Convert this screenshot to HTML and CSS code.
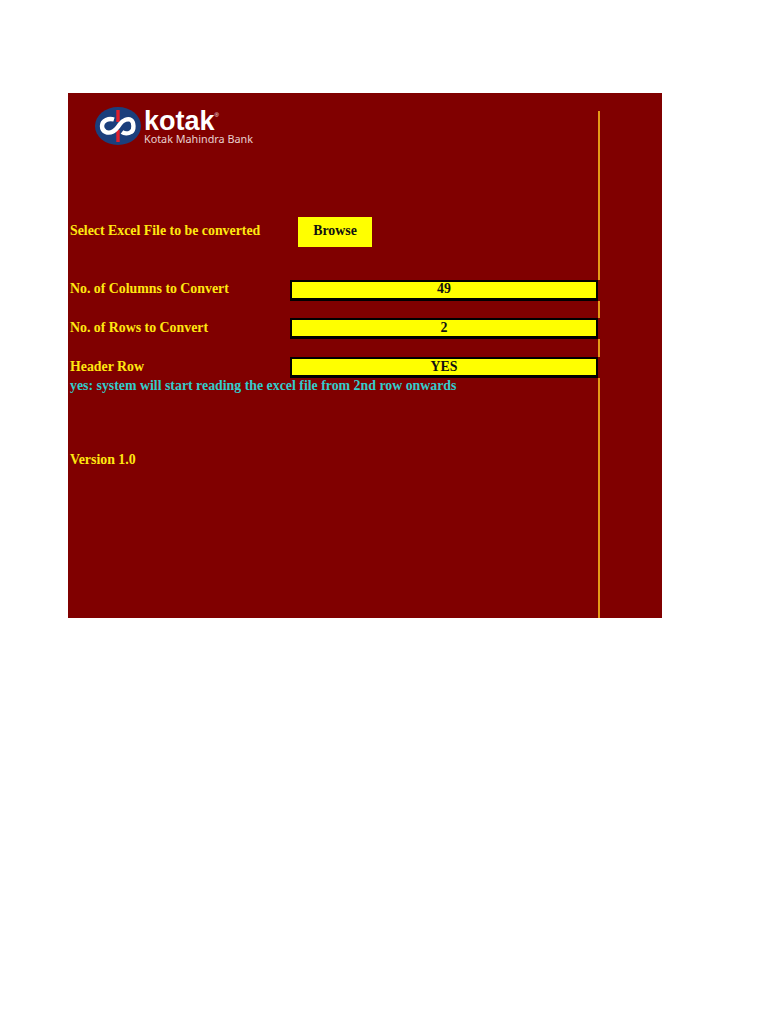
FILE: index.html
```html
<!DOCTYPE html>
<html lang="en">
<head>
  <meta charset="utf-8"/>
  <title>Excel Converter</title>
  <link rel="stylesheet" href="styles.css">
</head>
<body>
  <div class="sheet">
    <div class="divider"></div>
    <div class="logo">
      <svg class="logo-mark" viewBox="0 0 46 38" width="46" height="38">
        <ellipse cx="23" cy="19" rx="23" ry="19" fill="#1b3f7c"/>
        <path d="M23 3V15M23 23V35" stroke="#e0202c" stroke-width="3.4" fill="none"/>
        <path d="M19 12.500C14 11 7 13 7 19C7 25 13 27 18 24.500C21 23 23 20 25 17C28 13 33 11 36 13C39 15 39.500 23 36 25C33 27 29 26.500 27 25" stroke="#fff" stroke-width="4.4" fill="none"/>
      </svg>
      <div class="logo-text">
        <div class="logo-name">kotak<sup class="logo-reg">®</sup></div>
        <div class="logo-bank">Kotak Mahindra Bank</div>
      </div>
    </div>
    <div class="browse-row">
      <span class="label">Select Excel File to be converted</span>
      <button class="browse-btn">Browse</button>
    </div>
    <div class="field-row row-columns">
      <span class="label">No. of Columns to Convert</span>
      <div class="field">49</div>
    </div>
    <div class="field-row row-rows">
      <span class="label">No. of Rows to Convert</span>
      <div class="field">2</div>
    </div>
    <div class="field-row row-header">
      <span class="label">Header Row</span>
      <div class="field">YES</div>
    </div>
    <div class="hint">yes: system will start reading the excel file from 2nd row onwards</div>
    <div class="version">Version 1.0</div>
  </div>
</body>
</html>
```
FILE: styles.css
```css
html, body { margin: 0; padding: 0; background: #fff; }
body { padding: 93px 0 0 68px; font-family: "Liberation Serif", serif; font-weight: bold; font-size: 13.85px; }
.sheet { position: relative; box-sizing: border-box; width: 594px; height: 525px; background: #800000; padding: 14px 0 0 2px; color: #ffe810; }
.divider { position: absolute; left: 530px; top: 18px; bottom: 0; width: 2px; background: #e49a18; }
.logo { display: flex; align-items: center; margin-left: 25px; height: 38px; }
.logo-mark { display: block; }
.logo-text { margin-left: 3px; color: #fff; font-family: "Liberation Sans", sans-serif; }
.logo-name { font-size: 27px; line-height: 24px; font-weight: bold; }
.logo-reg { font-size: 6px; font-weight: normal; vertical-align: 13px; line-height: 0; }
.logo-bank { font-family: "Noto Sans", sans-serif; font-weight: normal; font-size: 10.8px; line-height: 11px; color: #e8d0d0; }
.browse-row { display: flex; align-items: center; height: 30px; margin-top: 72px; }
.browse-row .label { width: 228px; padding-bottom: 2px; }
.browse-btn { width: 74px; height: 30px; border: none; padding: 0 0 3px; background: #ffff00; color: #111; font: inherit; }
.field-row { display: flex; align-items: flex-start; height: 21px; }
.field-row .label { width: 220px; line-height: 17px; }
.row-columns { margin-top: 33px; }
.row-rows { margin-top: 17px; }
.row-header { margin-top: 18px; }
.row-rows .label, .row-header .label { line-height: 19px; }
.field { position: relative; box-sizing: border-box; width: 308px; height: 21px; background: #ffff00; color: #111; border: 2px solid #000; border-width: 2px 2px 3px 2px; box-shadow: 2px 0 0 #800000; text-align: center; line-height: 14px; }
.row-rows .field, .row-header .field { line-height: 16px; }
.hint { color: #33cccc; line-height: 16px; }
.version { margin-top: 58px; line-height: 16px; }
```
